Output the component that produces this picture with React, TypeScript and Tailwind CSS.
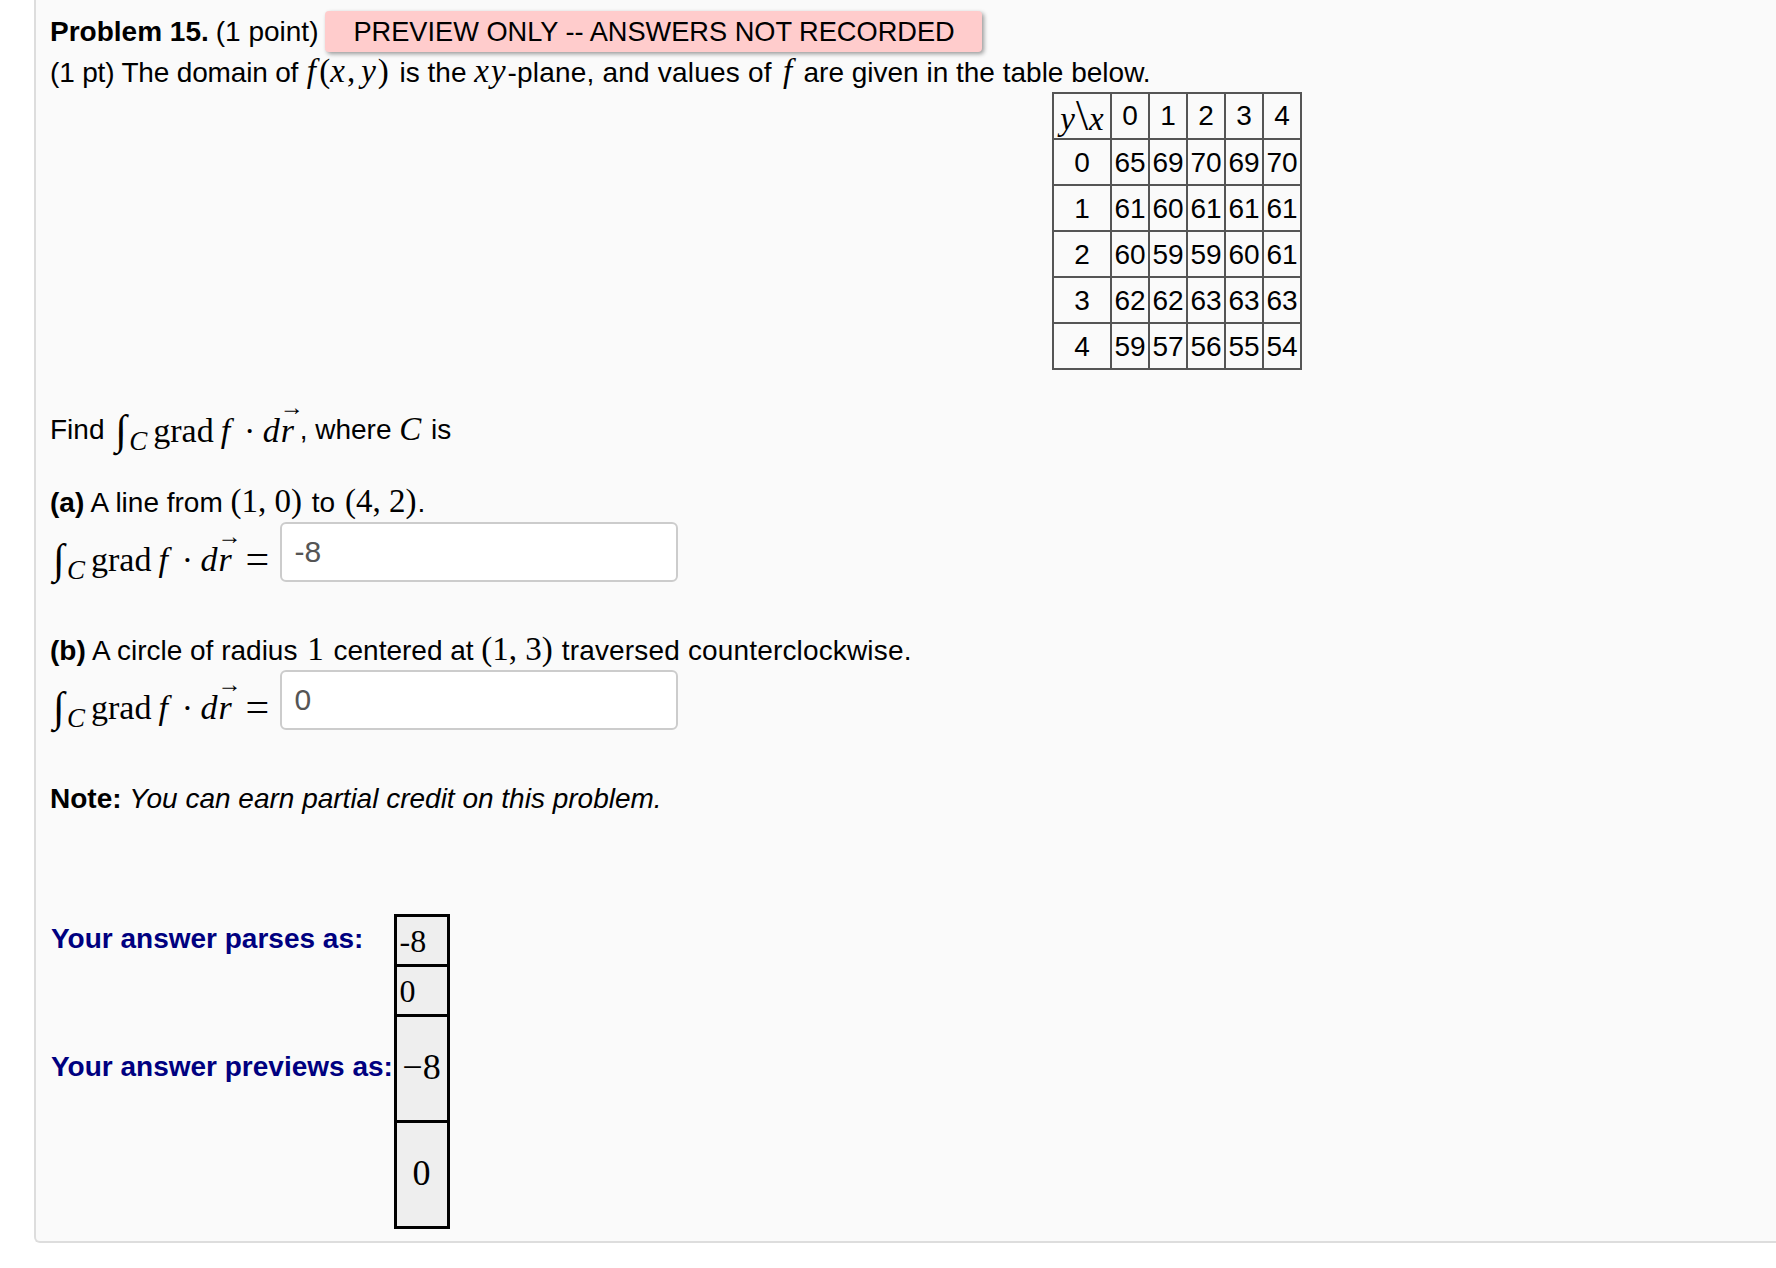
const sans = "font-['Liberation_Sans',Arial,sans-serif]";
const serif = "font-['Liberation_Serif',serif]";

const grid = [
  ["0", "65", "69", "70", "69", "70"],
  ["1", "61", "60", "61", "61", "61"],
  ["2", "60", "59", "59", "60", "61"],
  ["3", "62", "62", "63", "63", "63"],
  ["4", "59", "57", "56", "55", "54"],
];

function M({ children }: { children: React.ReactNode }) {
  return <span className={`${serif} italic text-[33px] tracking-[2px]`}>{children}</span>;
}

function N({ children }: { children: React.ReactNode }) {
  return <span className={`${serif} text-[33px]`}>{children}</span>;
}

// the italic f is much narrower here than in the math font, so it gets a box
function F() {
  return <span className={`${serif} inline-block w-[16px] text-center italic text-[33px]`}>f</span>;
}

function GradIntegral() {
  return (
    <span className={`${serif} inline-flex items-center text-[34px] whitespace-nowrap`}>
      <span className="ml-[3px] w-[14px] italic text-[42px] leading-none">∫</span>
      <span className="w-[24px] italic text-[27px] relative top-[11px]">C</span>
      <span>grad</span>
      <span className="ml-[7px] w-[20px] italic">f</span>
      <span className="w-[18px] mr-[4px] text-center">·</span>
      <span className="w-[18px] italic">d</span>
      <span className="w-[19px] italic relative">
        r
        <span className="absolute not-italic left-[-1px] top-[-10px] text-[24px] leading-none">→</span>
      </span>
    </span>
  );
}

function AnswerInput({ value }: { value: string }) {
  return (
    <div className="w-[398px] h-[60px] bg-white border-2 border-[#cccccc] rounded-[6px] pl-[12px] pt-[12px] text-[#555555] text-[30px] leading-[32px]">
      {value}
    </div>
  );
}

function IntegralRow({ value }: { value: string }) {
  return (
    <div className="mt-px flex items-center h-[60px]">
      <span className="flex items-center pt-[14px]">
        <GradIntegral />
        <span className={`${serif} w-[24px] ml-[8px] mr-[11px] text-center text-[42px] leading-none`}>=</span>
      </span>
      <AnswerInput value={value} />
    </div>
  );
}

export default function App() {
  return (
    <div className={`${sans} min-h-[1268px] bg-white text-black text-[28px] overflow-hidden`}>
      <div className="ml-[34px] h-[1243px] bg-[#fafafa] border-l-2 border-b-2 border-[#dddddd] rounded-bl-[6px] pl-[14px] pt-[11px]">
        <div className="flex items-center h-[41px]">
          <b>Problem 15.</b>
          <span className="ml-[7px]">(1 point)</span>
          <div className="ml-[7px] w-[657px] h-[41px] bg-[#ffcccc] rounded-[4px] shadow-[2px_2px_4px_#999999] pl-[28px] text-[27.2px] leading-[41px] whitespace-nowrap">
            PREVIEW ONLY -- ANSWERS NOT RECORDED
          </div>
        </div>

        <div className="h-[40px] leading-[38px] whitespace-pre">
          <span className="tracking-[-0.17px]">(1 pt) The domain of</span>
          <span className="ml-[5px]"><F /></span>
          <N>(</N><M>x</M><N>,</N><span className="ml-[6px]"><M>y</M></span><N>)</N>
          <span className="ml-[3px]"> is the </span>
          <M>xy</M>
          <span className="tracking-[0.2px]">-plane, and values of </span>
          <F />
          <span> are given in the table below.</span>
        </div>

        <table className="ml-[1002px] border-collapse border-2 border-[#555555] text-center leading-none">
          <tbody>
            <tr className="h-[46px]">
              <td className="w-[58px] border-2 border-[#555555] p-0 whitespace-nowrap">
                <span className={`${serif} italic text-[33px]`}>y</span>
                <span className={`${serif} mx-px text-[44px] leading-none`}>\</span>
                <span className={`${serif} italic text-[33px]`}>x</span>
              </td>
              {["0", "1", "2", "3", "4"].map((h) => (
                <td key={h} className="w-[38px] border-2 border-[#555555] p-0">{h}</td>
              ))}
            </tr>
            {grid.map((row) => (
              <tr key={row[0]} className="h-[46px]">
                {row.map((c, i) => (
                  <td key={i} className="border-2 border-[#555555] p-0 pt-px">{c}</td>
                ))}
              </tr>
            ))}
          </tbody>
        </table>

        <div className="mt-[40px] h-[40px] flex items-center whitespace-pre">
          Find <GradIntegral />, where <M>C</M> is
        </div>

        <div className="mt-[31px] h-[40px] leading-[40px] whitespace-pre">
          <b>(a)</b> A line from <N>(1, 0)</N><span className="mx-[2px]"> to </span><N>(4, 2)</N><span className="ml-[1px]">.</span>
        </div>
        <IntegralRow value="-8" />

        <div className="mt-[47px] h-[40px] leading-[40px] whitespace-pre">
          <b>(b)</b> A circle of radius <span className="mx-[2px]"><N>1</N></span> centered at <span className="mr-[1px]"><N>(1, 3)</N></span>
          <span className="tracking-[0.16px]"> traversed counterclockwise.</span>
        </div>
        <IntegralRow value="0" />

        <div className="mt-[49px] h-[40px] leading-[40px] whitespace-pre">
          <b>Note:</b> <i>You can earn partial credit on this problem.</i>
        </div>

        <table className="mt-[95px] border-collapse">
          <tbody>
            <tr className="h-[50px]">
              <td className="w-[345px] p-0 pl-px pb-[4px] font-bold text-[#000080] leading-none">Your answer parses as:</td>
              <td className={`${serif} w-[53px] border-[3px] border-black bg-[#eeeeee] p-0 pl-[3px] text-[32px] leading-none`}>-8</td>
            </tr>
            <tr className="h-[50px]">
              <td className="p-0"></td>
              <td className={`${serif} border-[3px] border-black bg-[#eeeeee] p-0 pl-[3px] text-[32px] leading-none`}>0</td>
            </tr>
            <tr className="h-[106px]">
              <td className="p-0 pl-px pb-[4px] font-bold text-[#000080] leading-none">Your answer previews as:</td>
              <td className={`${serif} border-[3px] border-black bg-[#eeeeee] p-0 pb-[4px] text-center text-[36px] leading-none`}>−8</td>
            </tr>
            <tr className="h-[106px]">
              <td className="p-0"></td>
              <td className={`${serif} border-[3px] border-black bg-[#eeeeee] p-0 pb-[4px] text-center text-[36px] leading-none`}>0</td>
            </tr>
          </tbody>
        </table>
      </div>
    </div>
  );
}
